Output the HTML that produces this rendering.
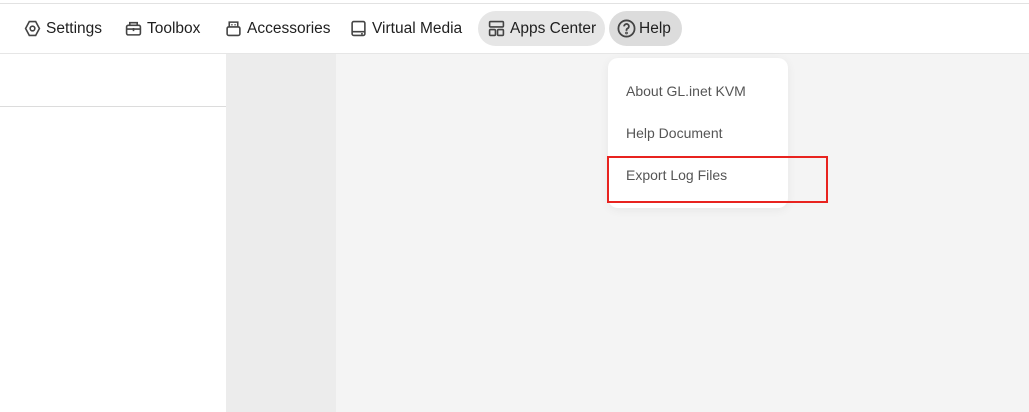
<!DOCTYPE html>
<html><head><style>
*{margin:0;padding:0;box-sizing:border-box}
body{width:1029px;height:412px;overflow:hidden;background:#f4f4f4;font-family:"Liberation Sans",sans-serif;position:relative}
.top{position:absolute;left:0;top:0;width:1029px;height:54px;background:#fff;border-bottom:1px solid #e6e6e6}
.topline{position:absolute;left:0;top:3px;width:1029px;height:1px;background:#e2e2e2}
.left{position:absolute;left:0;top:54px;width:226px;height:358px;background:#fff}
.left .l{position:absolute;left:0;top:52px;width:226px;height:1px;background:#dcdcdc}
.col{position:absolute;left:226px;top:54px;width:110px;height:358px;background:#ececec}
.nav{position:absolute;top:11px;height:35px;display:flex;align-items:center;font-size:15.5px;color:#1f1f1f;white-space:nowrap}
.nav svg{flex-shrink:0;width:17px;height:17px;margin-right:5px;fill:none;stroke:#444;stroke-width:1.5}
.pill{border-radius:18px;padding:0 10px}
.dd{position:absolute;left:608px;top:58px;width:180px;height:150px;background:#fff;border-radius:10px;box-shadow:0 2px 10px rgba(0,0,0,.06)}
.dd div{position:absolute;left:18px;font-size:14px;color:#555}
.red{position:absolute;left:607px;top:156px;width:221px;height:47px;border:2px solid #e8231f}
</style></head><body>
<div class="top"><div class="topline"></div></div>
<div class="left"><div class="l"></div></div>
<div class="col"></div>
<div class="nav" style="left:24px"><svg viewBox="0 0 16 16"><path d="M5 1.5h6l3.5 6.5-3.5 6.5H5L1.5 8z"/><circle cx="8" cy="8" r="2.2"/></svg>Settings</div>
<div class="nav" style="left:125px"><svg viewBox="0 0 16 16"><rect x="1.5" y="5" width="13" height="9" rx="1.5"/><path d="M4.5 5V2.5h7V5M1.5 8.5h13M8 7.5v3"/></svg>Toolbox</div>
<div class="nav" style="left:225px"><svg viewBox="0 0 16 16"><rect x="2" y="6.5" width="12" height="8" rx="1.5"/><path d="M4 6.5V2h8v4.5M6.5 4v1M9.5 4v1"/></svg>Accessories</div>
<div class="nav" style="left:350px"><svg viewBox="0 0 16 16"><rect x="2" y="1.5" width="12" height="13" rx="1.5"/><path d="M2 11h12M10.5 13h1.5"/></svg>Virtual Media</div>
<div class="nav pill" style="left:478px;width:127px;background:#e6e6e6"><svg viewBox="0 0 16 16"><rect x="1.5" y="1.5" width="13" height="5" rx="1"/><rect x="1.5" y="9" width="5.5" height="5.5" rx="1"/><rect x="9" y="9" width="5.5" height="5.5" rx="1"/></svg>Apps Center</div>
<div class="nav pill" style="left:609px;width:73px;background:#dcdcdc;padding:0 8px"><svg viewBox="0 0 16 16" style="width:19px;height:19px;margin-right:3px"><circle cx="8" cy="8" r="6.8"/><path d="M6 6.2a2 2 0 1 1 2.8 1.8c-.6.3-.8.7-.8 1.4v.6"/><circle cx="8" cy="11.8" r=".4"/></svg>Help</div>
<div class="dd">
<div style="top:25px">About GL.inet KVM</div>
<div style="top:67px">Help Document</div>
<div style="top:109px">Export Log Files</div>
</div>
<div class="red"></div>
</body></html>
